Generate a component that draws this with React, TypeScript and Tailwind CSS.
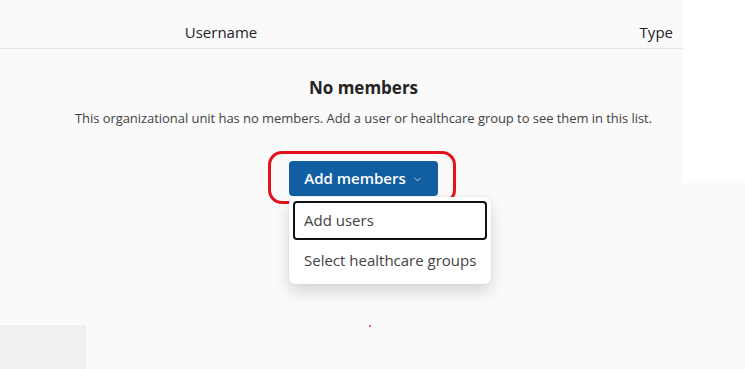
import { ChevronDown } from 'lucide-react';

const font = { fontFamily: '"Open Sans", "Noto Sans", sans-serif' };

function Header() {
  return (
    <div className="flex h-[49px] items-center border-b border-[#e6e6e6] text-[15px] text-[#242424]">
      <div className="w-[442px] pt-[17px] text-center">Username</div>
      <div className="flex-1 pr-[10px] pt-[17px] text-right">Type</div>
    </div>
  );
}

function AddMembersMenu() {
  return (
    <div className="relative">
      <div className="pointer-events-none absolute -left-[21px] -top-[10px] h-[53px] w-[188px] rounded-[14px] border-[3px] border-[#e4101c]" />
      <button className="flex h-[35px] w-[149px] items-center justify-center gap-[6px] rounded-[4px] bg-[#115ea3] text-[15px] font-semibold text-white">
        Add members
        <ChevronDown className="mt-[2px] h-[11px] w-[11px]" strokeWidth={1.5} />
      </button>
      <div className="absolute left-0 top-[36px] w-[202px] whitespace-nowrap rounded-[6px] bg-white p-[4px] text-[15px] text-[#424242] shadow-[0_8px_16px_rgba(0,0,0,0.14),0_0_2px_rgba(0,0,0,0.12)]">
        <div className="flex h-[39px] items-center rounded-[4px] border-2 border-[#111] px-[9px]">Add users</div>
        <div className="flex h-[40px] items-center px-[11px]">Select healthcare groups</div>
      </div>
    </div>
  );
}

export default function App() {
  return (
    <div className="flex h-[369px] w-[745px] overflow-hidden bg-[#fafafa]" style={font}>
      <div className="flex w-[683px] flex-col">
        <Header />
        <div className="flex flex-1 flex-col items-center pl-[44px]">
          <h2 className="mt-[26px] text-[17px] font-bold text-[#242424]">No members</h2>
          <p className="mt-[8px] whitespace-nowrap text-[13px] tracking-[-0.05px] text-[#424242]">
            This organizational unit has no members. Add a user or healthcare group to see them in this list.
          </p>
          <div className="mt-[33px]">
            <AddMembersMenu />
          </div>
        </div>
        <div className="flex h-[44px] items-start">
          <div className="h-full w-[86px] bg-[#f0f0f0]" />
          <div className="ml-[283px] h-[2px] w-[2px] bg-[#f06060]" />
        </div>
      </div>
      <div className="flex w-[62px] flex-col">
        <div className="h-[183px] bg-white" />
      </div>
    </div>
  );
}
